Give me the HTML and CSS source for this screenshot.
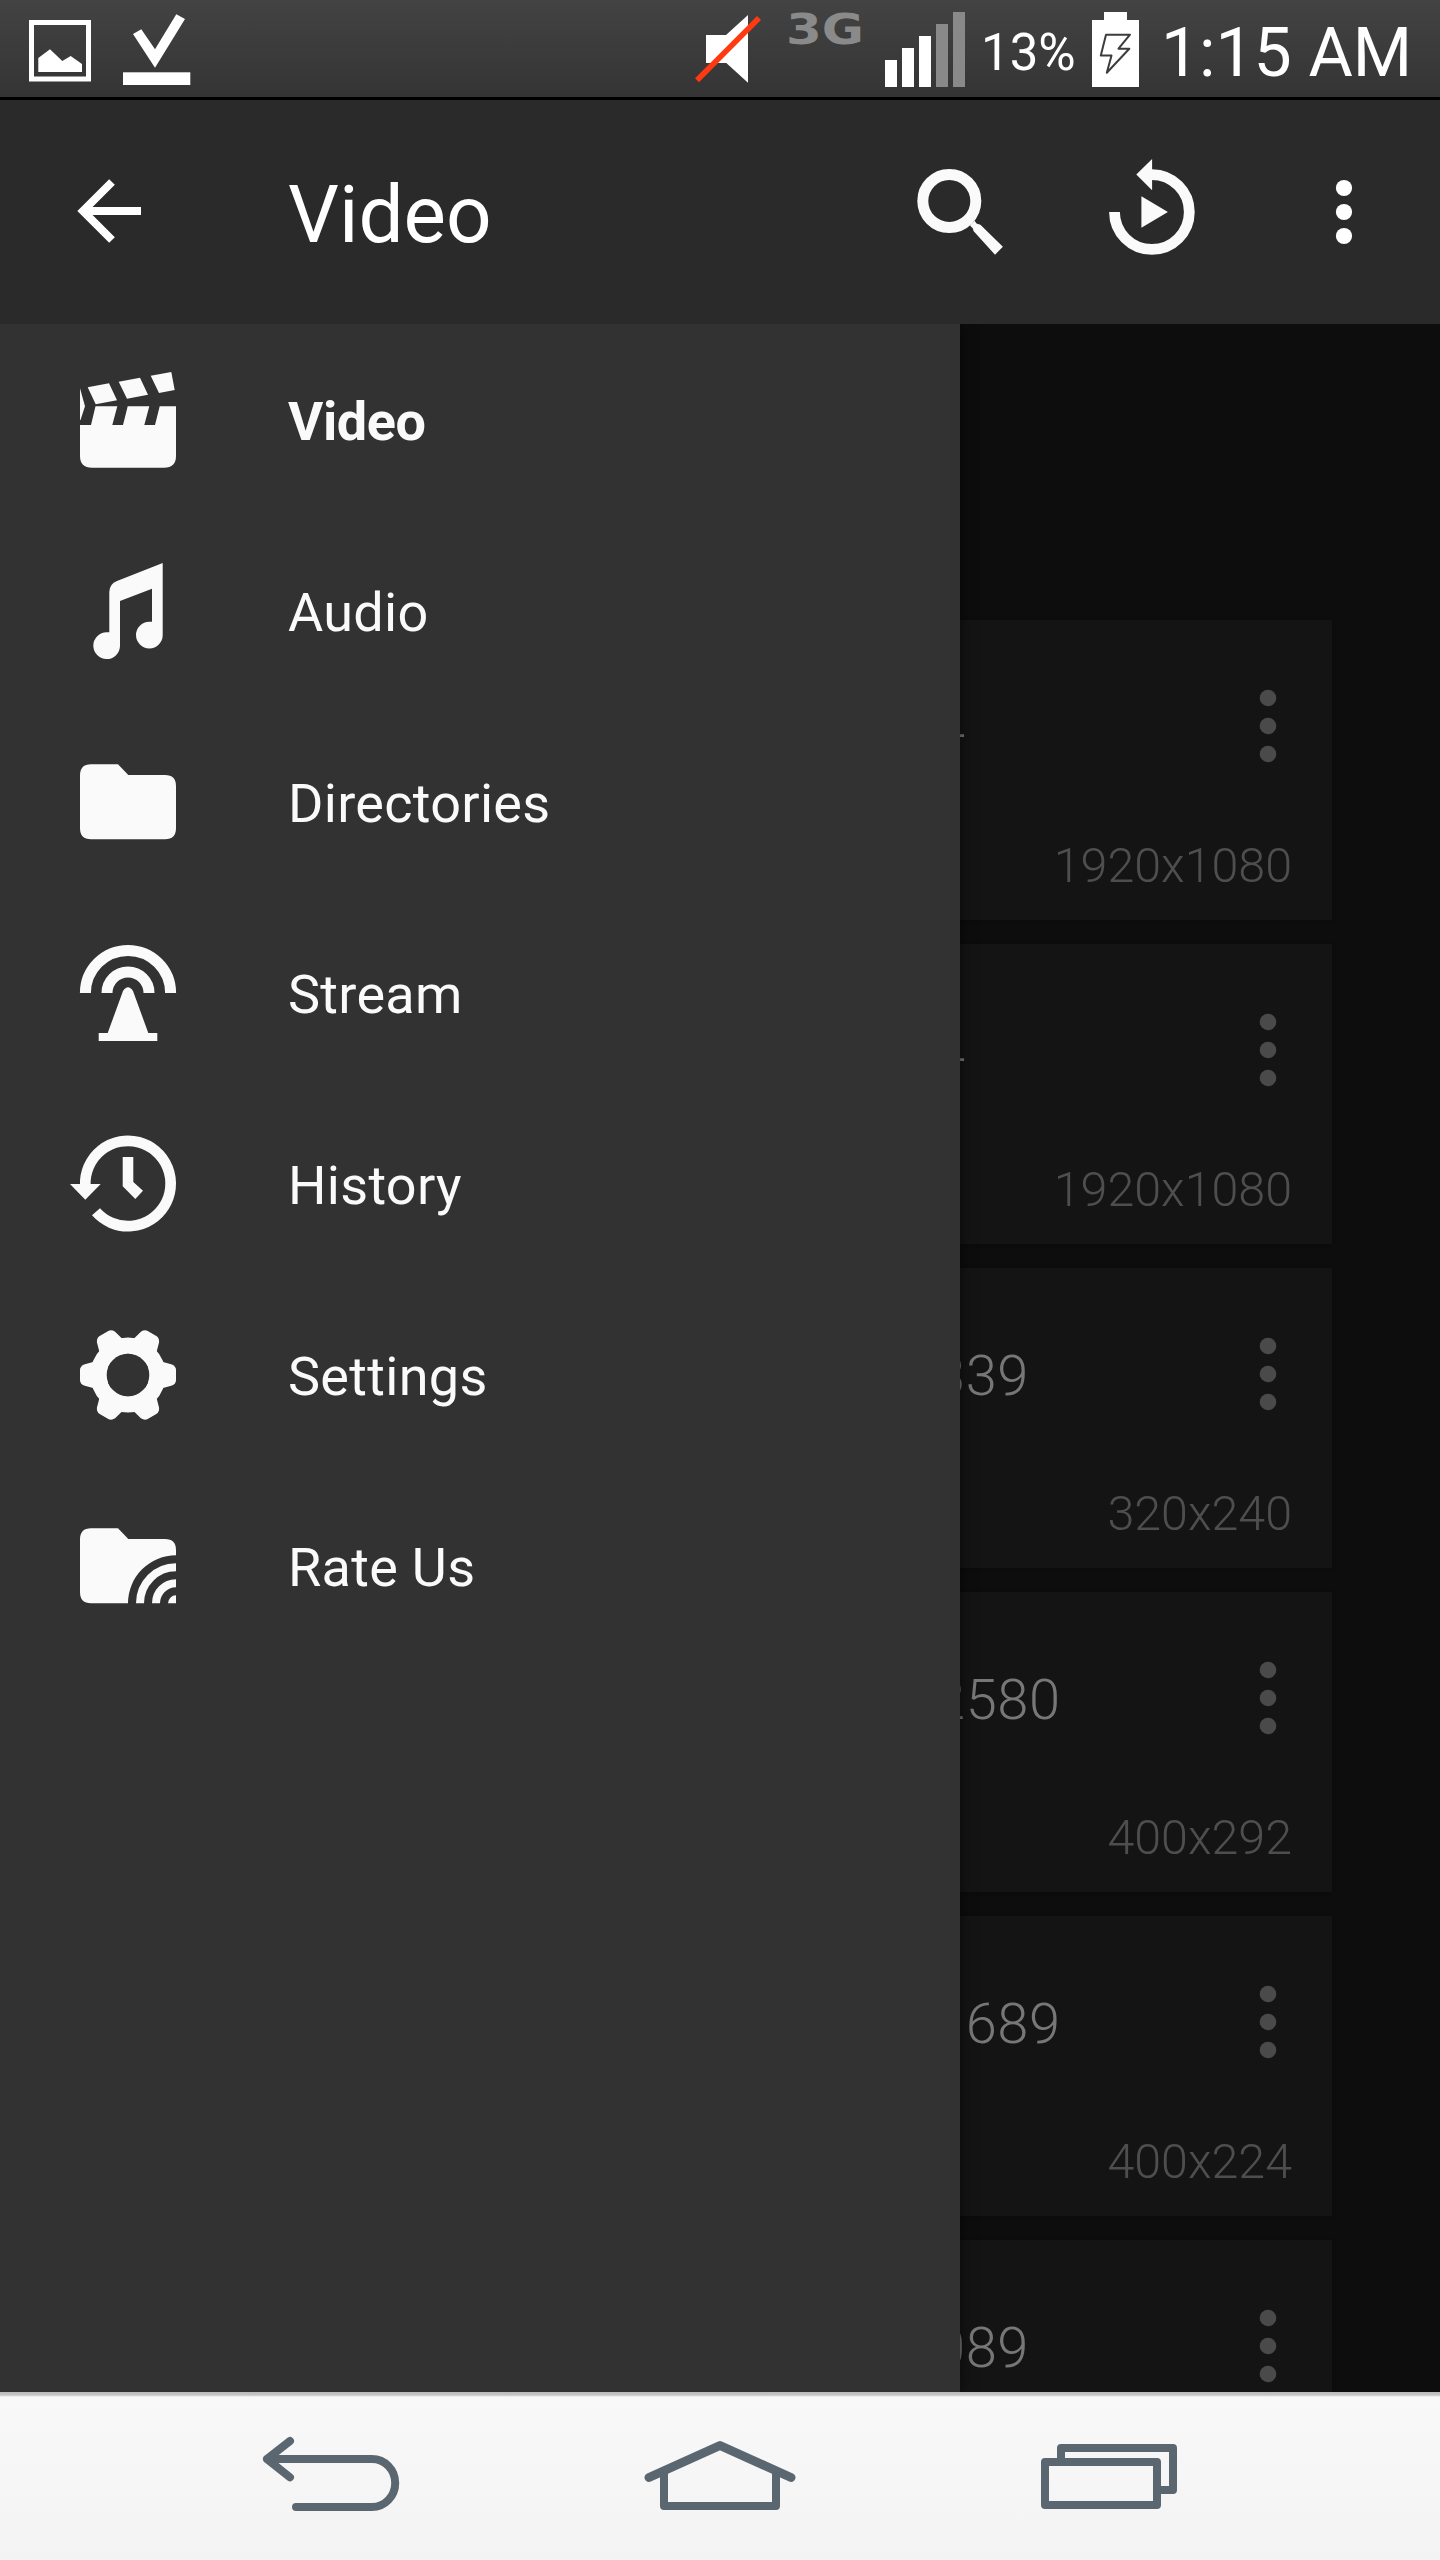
FILE: index.html
```html
<!DOCTYPE html>
<html lang="en">
<head>
<meta charset="utf-8">
<title>Video</title>
<link rel="stylesheet" href="styles.css">
</head>
<body>
<div class="phone">
  <header class="status">
    <svg class="status-left" width="180" height="97" viewBox="20 0 180 97">
      <rect x="31.5" y="22.500" width="57" height="56.500" fill="none" stroke="#fff" stroke-width="5"/>
      <path d="M38.300 72V58L50 49.300 62.300 61 70.700 56 82 64V72Z" fill="#fff"/>
      <path d="M133 34 141.300 29.300 155 49.300 176.300 14.300 185 19 155 67.700Z" fill="#fff"/>
      <rect x="123" y="72.300" width="67.300" height="12.700" fill="#fff"/>
    </svg>
    <svg class="status-radio" width="280" height="97" viewBox="690 0 280 97">
      <path d="M706 35H726L748 15V82.700L726.300 63H706Z" fill="#fff"/>
      <path d="M697 80.300 759 18" stroke="#ff3a12" stroke-width="5.500"/>
      <text class="network" x="786" y="43.500" textLength="78" lengthAdjust="spacingAndGlyphs">3G</text>
      <path d="M885 60h12v27h-12zM902 48h12v39h-12zM919 36h12v51h-12z" fill="#fff"/>
      <path d="M936 24h12v63h-12zM953 12h12v75h-12z" fill="#898989"/>
    </svg>
    <span class="percent">13%</span>
    <svg class="battery" width="47" height="97" viewBox="1092 0 47 97">
      <path d="M1104 12h23v8h12v67h-47V20h12z" fill="#fff"/>
      <path d="M1106 34.700H1130L1118.500 48.700H1129.300L1106.800 72.800 1111.500 55.500H1100.800Z" fill="#fff" stroke="#3c3c3c" stroke-width="2" stroke-linejoin="round"/>
    </svg>
    <span class="clock">1:15 AM</span>
  </header>

  <div class="appbar">
    <svg class="back" width="120" height="120" viewBox="50 152 120 120">
      <path d="M112 182 83 211 112 240M83 211H141" fill="none" stroke="#fff" stroke-width="8"/>
    </svg>
    <h1 class="title">Video</h1>
    <div class="actions">
      <svg width="120" height="120" viewBox="0 0 120 120">
        <circle cx="49.300" cy="51" r="26.500" fill="none" stroke="#fafafa" stroke-width="11"/>
        <path d="M74.600 70.700 76.500 73.500 80.400 74.700 102.900 96.700 95 104.700 73.500 81 72.900 78.500 70 75.500Z" fill="#fafafa"/>
      </svg>
      <svg width="120" height="120" viewBox="0 0 120 120">
        <path d="M22.500 62A37.400 37.400 0 1 0 59.900 24.600" fill="none" stroke="#fafafa" stroke-width="10.800"/>
        <path d="M44.300 24.400 60.100 9V40.300ZM49.400 46.300 75.900 62 49.400 77.700Z" fill="#fafafa"/>
      </svg>
      <svg width="120" height="120" viewBox="0 0 120 120" fill="#fff">
        <circle cx="60" cy="38" r="8.100"/><circle cx="60" cy="62" r="8.100"/><circle cx="60" cy="86" r="8.100"/>
      </svg>
    </div>
  </div>

  <main class="main">
    <div class="list">
      <article class="card">
        <div class="name">4</div>
        <svg class="more" width="24" height="76" viewBox="0 0 24 76"><circle cx="12" cy="10" r="8.300"/><circle cx="12" cy="38" r="8.300"/><circle cx="12" cy="66" r="8.300"/></svg>
        <div class="size">1920x1080</div>
      </article>
      <article class="card">
        <div class="name">4</div>
        <svg class="more" width="24" height="76" viewBox="0 0 24 76"><circle cx="12" cy="10" r="8.300"/><circle cx="12" cy="38" r="8.300"/><circle cx="12" cy="66" r="8.300"/></svg>
        <div class="size">1920x1080</div>
      </article>
      <article class="card">
        <div class="name">339</div>
        <svg class="more" width="24" height="76" viewBox="0 0 24 76"><circle cx="12" cy="10" r="8.300"/><circle cx="12" cy="38" r="8.300"/><circle cx="12" cy="66" r="8.300"/></svg>
        <div class="size">320x240</div>
      </article>
      <article class="card">
        <div class="name">2580</div>
        <svg class="more" width="24" height="76" viewBox="0 0 24 76"><circle cx="12" cy="10" r="8.300"/><circle cx="12" cy="38" r="8.300"/><circle cx="12" cy="66" r="8.300"/></svg>
        <div class="size">400x292</div>
      </article>
      <article class="card">
        <div class="name">1689</div>
        <svg class="more" width="24" height="76" viewBox="0 0 24 76"><circle cx="12" cy="10" r="8.300"/><circle cx="12" cy="38" r="8.300"/><circle cx="12" cy="66" r="8.300"/></svg>
        <div class="size">400x224</div>
      </article>
      <article class="card">
        <div class="name">089</div>
        <svg class="more" width="24" height="76" viewBox="0 0 24 76"><circle cx="12" cy="10" r="8.300"/><circle cx="12" cy="38" r="8.300"/><circle cx="12" cy="66" r="8.300"/></svg>
      </article>
    </div>

    <nav class="drawer">
      <a class="item active">
        <svg width="120" height="120" viewBox="0 0 120 120">
          <path d="M12 65H23L27.500 46.300H49.300L44.300 65H55L59.700 46.300H81.300L76.300 65H87L91.700 46.300H108V96Q108 107.700 96 107.700H24Q12 107.700 12 96Z"/>
          <path d="M19.700 27.300 41 23.300 49 40.300 27.700 44.300ZM50.700 21.700 72 17.700 80 34.700 59 38.700ZM82.700 15.700 103.300 12 106.700 30 91 33ZM12 28.300 17 46.300 12.500 60H12Z"/>
        </svg>
        <span>Video</span>
      </a>
      <a class="item">
        <svg width="120" height="120" viewBox="0 0 120 120">
          <path d="M94.700 12V84A13.350 13.350 0 1 1 81.300 70.700H84V37.700L52 50V94.700A13.350 13.350 0 1 1 38.700 81.300H41.300V41Q41.300 33 49 29.900Z"/>
        </svg>
        <span>Audio</span>
      </a>
      <a class="item">
        <svg width="120" height="120" viewBox="0 0 120 120">
          <path d="M23 22.300H50L60.300 33H97Q108 33 108 44V86Q108 97.300 97 97.300H23Q12 97.300 12 86V33.500Q12 22.300 23 22.300Z"/>
        </svg>
        <span>Directories</span>
      </a>
      <a class="item">
        <svg width="120" height="120" viewBox="0 0 120 120">
          <path d="M17.400 60A42.600 42.600 0 0 1 102.600 60M39 60A21 21 0 0 1 81 60" fill="none" stroke="#fafafa" stroke-width="11"/>
          <path d="M30.700 100H39.700L55 58Q60 50.500 65 58L80.300 100H89.300V108H30.700Z"/>
        </svg>
        <span>Stream</span>
      </a>
      <a class="item">
        <svg width="120" height="120" viewBox="0 0 120 120">
          <path d="M17.300 61A42.700 42.700 0 1 1 28 87.800" fill="none" stroke="#fafafa" stroke-width="10.700"/>
          <path d="M2 60H32.700L17.300 75.700ZM54.700 33H65.300V58L75 66.700 67.300 75 54.700 62.300Z"/>
        </svg>
        <span>History</span>
      </a>
      <a class="item">
        <svg width="120" height="120" viewBox="0 0 120 120">
          <defs><path id="tooth" d="M80 47H95L104 49.500Q108 51.500 108 55V65Q108 68.500 104 70.500L95 73H80Z"/></defs>
          <circle cx="60" cy="60" r="29.400" fill="none" stroke="#fafafa" stroke-width="16.200"/>
          <use href="#tooth"/>
          <use href="#tooth" transform="rotate(60 60 60)"/>
          <use href="#tooth" transform="rotate(120 60 60)"/>
          <use href="#tooth" transform="rotate(180 60 60)"/>
          <use href="#tooth" transform="rotate(240 60 60)"/>
          <use href="#tooth" transform="rotate(300 60 60)"/>
          <circle cx="60" cy="60" r="21.300" fill="#323232"/>
        </svg>
        <span>Settings</span>
      </a>
      <a class="item">
        <svg width="120" height="120" viewBox="0 0 120 120">
          <path d="M23 22.300H50L60.300 33H97Q108 33 108 44V49.300A48 48 0 0 0 60 97.300H23Q12 97.300 12 86V33.500Q12 22.300 23 22.300Z"/>
          <path d="M72 97.300A36 36 0 0 1 108 61.300M88 97.300A20 20 0 0 1 108 77.300" fill="none" stroke="#fafafa" stroke-width="8"/>
          <path d="M100 97.300A8 8 0 0 1 108 89.300V97.300Z"/>
        </svg>
        <span>Rate Us</span>
      </a>
    </nav>
  </main>

  <footer class="softkeys">
    <svg width="144" height="90" viewBox="260 2430 144 90">
      <path d="M290 2441 267 2459 290 2477.300M267 2459H372A23.200 24 0 0 1 372 2507H296" stroke-linecap="round"/>
    </svg>
    <svg width="160" height="90" viewBox="640 2430 160 90">
      <path d="M649 2477.500 720 2445.500 791 2477.500" stroke-width="9" stroke-linecap="round"/>
      <path d="M664 2472V2506H776V2472"/>
    </svg>
    <svg width="144" height="90" viewBox="1036 2430 144 90">
      <path d="M1061 2460V2448H1173V2490H1160"/>
      <path d="M1045 2462H1157V2505H1045Z"/>
    </svg>
  </footer>
</div>
</body>
</html>
```

FILE: styles.css
```css
* { box-sizing: border-box; }

body {
  margin: 0;
  background: #0d0d0d;
  font-family: Roboto, "Liberation Sans", sans-serif;
  color: #fff;
}

svg { display: block; flex: none; }

.phone {
  display: flex;
  flex-direction: column;
  width: 1440px;
  height: 2560px;
  overflow: hidden;
}

.status {
  display: flex;
  align-items: center;
  flex: none;
  height: 100px;
  padding-left: 20px;
  border-bottom: 3px solid #000;
  background: linear-gradient(#434343, #343434);
  white-space: nowrap;
}
.status-radio { margin-left: 490px; }
.network {
  font: bold 42px "DejaVu Sans", sans-serif;
  fill: #8a8a8a;
}
.percent {
  width: 111px;
  margin-left: 11px;
  padding-top: 7px;
  font-size: 51px;
}
.clock {
  margin-left: 22px;
  padding-top: 9px;
  font-size: 68px;
  letter-spacing: -.1px;
}

.appbar {
  display: flex;
  align-items: center;
  flex: none;
  height: 224px;
  padding: 0 36px 0 50px;
  background: #2a2a2a;
}
.title {
  margin: 6px 0 0 118px;
  font-size: 80px;
  font-weight: 400;
}
.actions {
  display: flex;
  gap: 72px;
  margin: 0 0 4px auto;
}

.main {
  position: relative;
  flex: none;
  height: 2068px;
  overflow: hidden;
  background: #0d0d0d;
}

.list {
  display: flex;
  flex-direction: column;
  gap: 24px;
  padding: 296px 108px 0;
}
.card {
  display: grid;
  grid-template-columns: 1fr 24px;
  grid-template-rows: 139px 60px;
  flex: none;
  height: 300px;
  padding: 76px 52px 0 826px;
  background: #141414;
  box-shadow: 0 1px 4px rgba(0, 0, 0, .2);
  font-weight: 300;
}
.name {
  color: #777;
  font-size: 56px;
  line-height: 64px;
  letter-spacing: .6px;
}
.more {
  margin-top: -8px;
  fill: #4a4a4a;
}
.size {
  grid-column: 1 / 3;
  margin: 1px -12px 0 0;
  color: #4e4e4e;
  font-size: 48.4px;
  line-height: 60px;
  text-align: right;
}

/* Drawer slides over the list */
.drawer {
  position: absolute;
  top: 0;
  left: 0;
  width: 960px;
  height: 100%;
  background: #323232;
  box-shadow: 0 0 14px rgba(0, 0, 0, .6);
}
.item {
  display: flex;
  align-items: center;
  gap: 100px;
  height: 191px;
  padding-left: 68px;
  color: #fafafa;
  fill: #fafafa;
  font-size: 54px;
  letter-spacing: .3px;
}
.item span { padding-top: 4px; }
.active {
  font-weight: 700;
  letter-spacing: -.4px;
}

.softkeys {
  display: flex;
  align-items: center;
  gap: 236px;
  flex: none;
  height: 168px;
  padding: 0 260px 2px;
  background:
    linear-gradient(#b9bbbb, #c6c6c6 3px, #fafafa 5px, transparent 5px),
    linear-gradient(#f9f9f9, #f3f3f3);
}
.softkeys svg {
  fill: none;
  stroke: #5b6770;
  stroke-width: 8;
  stroke-linejoin: round;
}
```
